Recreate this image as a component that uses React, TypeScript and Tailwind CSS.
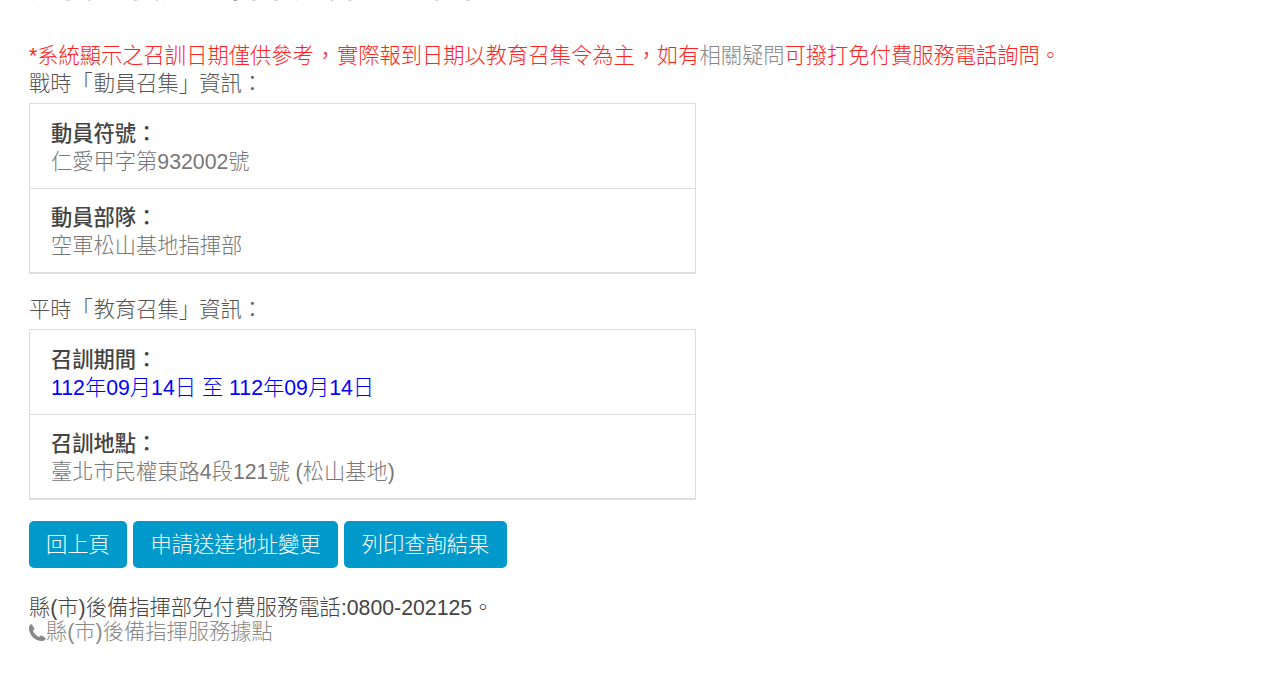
const font = { fontFamily: '"Liberation Sans", "Noto Sans CJK TC", sans-serif' };

function Phone() {
  return (
    <svg viewBox="0 0 24 24" className="w-[17px] h-[17px] shrink-0 fill-[#888888]">
      <path d="M4.2 .8 7.6 6.2c.3.5.2 1.100-.2 1.500L5.600 9.600c1.200 3.400 5.400 7.800 8.800 8.800l1.900-1.800c.4-.4 1-.5 1.500-.2l5.400 3.400c.6.4.7 1.100.3 1.600C22 23.200 20 24 18 24 8.500 24 0 15.500 0 6 0 4 .8 2 2.600 .5 3.100 .1 3.800.2 4.200.8z" />
    </svg>
  );
}

function Panel({ rows }: { rows: { label: string; value: string; blue?: boolean }[] }) {
  return (
    <div className="w-[667px] border border-[#dddddd] border-b-2 bg-white pt-px">
      {rows.map((r, i) => (
        <div key={r.label} className={`px-[21px] pt-[15px] pb-[12px] leading-[28px] ${i > 0 ? "border-t border-[#dddddd]" : ""}`}>
          <div className="font-medium text-[#444444]">{r.label}</div>
          <div className={r.blue ? "text-[#0000ff]" : "text-[#777777]"}>{r.value}</div>
        </div>
      ))}
    </div>
  );
}

export default function App() {
  return (
    <div lang="zh-TW" style={font} className="h-[674px] overflow-hidden bg-white text-[21.28px] leading-[28px] font-light text-[#555555]">
      <div className="pl-[29px] mt-[-30px]">
        <div className="text-[32px] leading-[32px] h-[32px] font-medium text-[#444444]">兵役 – 役男 – 召集資料查詢結果：</div>
        <div className="mt-[40px] text-[#ff2222]">
          *系統顯示之召訓日期僅供參考<span className="mx-px">，</span>實際報到日期以教育召集令為主<span className="ml-px">，</span>如有<span className="text-[#888888]">相關疑問</span>可撥打免付費服務電話詢問。
        </div>
        <div className="mb-[5px]">戰時<span className="mr-px">「</span>動員召集<span className="-mr-px">」</span>資訊：</div>
        <Panel rows={[{ label: "動員符號：", value: "仁愛甲字第932002號" }, { label: "動員部隊：", value: "空軍松山基地指揮部" }]} />
        <div className="mt-[22px] mb-[5px]">平時<span className="mr-px">「</span>教育召集<span className="-mr-px">」</span>資訊：</div>
        <Panel rows={[{ label: "召訓期間：", value: "112年09月14日 至 112年09月14日", blue: true }, { label: "召訓地點：", value: "臺北市民權東路4段121號 (松山基地)" }]} />
        <div className="flex gap-[6px] mt-[21px]">
          <button className="h-[47px] w-[98px] rounded-[5px] bg-[#0099cc] text-white">回上頁</button>
          <button className="h-[47px] w-[205px] rounded-[5px] bg-[#0099cc] text-white">申請送達地址變更</button>
          <button className="h-[47px] w-[163px] rounded-[5px] bg-[#0099cc] text-white">列印查詢結果</button>
        </div>
        <div className="mt-[27px] leading-[26px] text-[#444444]">縣(市)後備指揮部免付費服務電話:0800-202125。</div>
        <div className="flex items-center leading-[23px] text-[#888888]"><Phone />縣(市)後備指揮服務據點</div>
      </div>
    </div>
  );
}
